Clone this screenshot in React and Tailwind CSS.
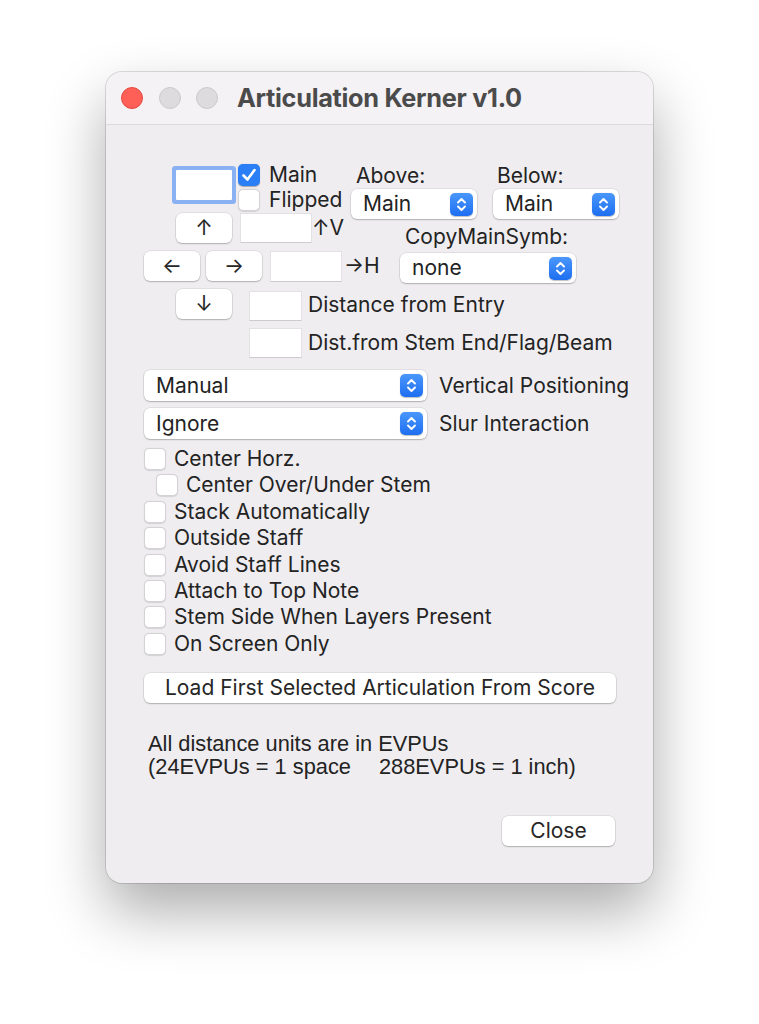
import React from 'react';

const font = { fontFamily: 'Inter, "Noto Sans", sans-serif' };

const Stepper = () => (
  <span className="grid h-[23px] w-[23px] shrink-0 place-items-center rounded-[5px] bg-gradient-to-b from-[#4a97fb] to-[#1d6ef1] shadow-[0_0.5px_1px_rgba(0,0,0,0.25)]">
    <svg width="23" height="23" viewBox="0 0 23 23" fill="none">
      <path d="M8 9.5 11.5 6 15 9.5" stroke="white" strokeWidth="1.9" strokeLinecap="round" strokeLinejoin="round" />
      <path d="M8 13.5 11.5 17 15 13.5" stroke="white" strokeWidth="1.9" strokeLinecap="round" strokeLinejoin="round" />
    </svg>
  </span>
);

const Popup = ({ value, className }) => (
  <div
    className={`flex shrink-0 items-center justify-between rounded-[6px] bg-white pl-[12px] pr-[4px] shadow-[0_0_0_0.5px_rgba(0,0,0,0.12),0_1px_1.5px_rgba(0,0,0,0.22)] ${className}`}
  >
    <span>{value}</span>
    <Stepper />
  </div>
);

const PushButton = ({ children, className }) => (
  <button
    type="button"
    className={`flex shrink-0 items-center justify-center rounded-[6px] bg-white text-[#262626] shadow-[0_0_0_0.5px_rgba(0,0,0,0.12),0_1px_1.5px_rgba(0,0,0,0.22)] ${className}`}
  >
    {children}
  </button>
);

const Field = ({ className }) => (
  <div className={`shrink-0 border border-[#e3e1e4] border-b-[#cdcbce] bg-white ${className}`} />
);

const Check = ({ checked }) =>
  checked ? (
    <span className="grid h-[22px] w-[22px] shrink-0 place-items-center rounded-[5px] bg-[#2a7ef6] shadow-[0_0.5px_1px_rgba(0,0,0,0.3)]">
      <svg width="22" height="22" viewBox="0 0 22 22" fill="none">
        <path d="M5.5 11.5 9.5 15.5 16.5 6" stroke="white" strokeWidth="2.6" strokeLinecap="round" strokeLinejoin="round" />
      </svg>
    </span>
  ) : (
    <span className="h-[22px] w-[22px] shrink-0 rounded-[5px] border border-[#d4d2d5] bg-white shadow-[0_0.5px_1px_rgba(0,0,0,0.12)]" />
  );

const options = [
  ['Center Horz.', false],
  ['Center Over/Under Stem', true],
  ['Stack Automatically', false],
  ['Outside Staff', false],
  ['Avoid Staff Lines', false],
  ['Attach to Top Note', false],
  ['Stem Side When Layers Present', false],
  ['On Screen Only', false]
];

export default function App() {
  return (
    <div className="h-[1024px] w-[759px] bg-white pl-[106px] pt-[72px]" style={font}>
      <div className="flex h-[811px] w-[547px] flex-col overflow-hidden whitespace-nowrap rounded-[16px] bg-[#efedf0] text-[21px] leading-[24px] text-[#232323] shadow-[0_28px_60px_rgba(0,0,0,0.33),0_0_0_1px_rgba(0,0,0,0.13)]">
        {/* title bar */}
        <div className="flex h-[53px] shrink-0 items-center border-b border-[#dcdadd] bg-[#f4f2f5] pl-[15px]">
          <span className="h-[22px] w-[22px] rounded-full border border-[#e2463f] bg-[#fe5f57]" />
          <span className="ml-[16px] h-[22px] w-[22px] rounded-full border border-[#cbc9cc] bg-[#dddbde]" />
          <span className="ml-[15px] h-[22px] w-[22px] rounded-full border border-[#cbc9cc] bg-[#dddbde]" />
          <span className="ml-[19px] text-[25.3px] font-bold tracking-[-0.3px] text-[#4b4b4b]">Articulation Kerner v1.0</span>
        </div>

        {/* body */}
        <div className="flex flex-1 flex-col px-[38px] pt-[39px]">
          <div className="flex">
            {/* left column */}
            <div className="w-[207px] shrink-0">
              <div className="flex h-[47px] items-start">
                <div className="ml-[32px] mt-[6px] h-[30px] w-[56px] shrink-0 rounded-[1px] bg-white shadow-[0_0_0_4px_rgba(120,166,242,0.85)]" />
                <div className="ml-[6px] flex flex-col gap-[3px]">
                  <div className="flex h-[22px] items-center gap-[9px]">
                    <Check checked />
                    <span>Main</span>
                  </div>
                  <div className="flex h-[22px] items-center gap-[9px]">
                    <Check />
                    <span>Flipped</span>
                  </div>
                </div>
              </div>

              <div className="mt-[2px] flex h-[30px] items-center">
                <PushButton className="ml-[32px] h-[30px] w-[56px]">↑</PushButton>
                <Field className="ml-[8px] h-[30px] w-[72px]" />
                <span>↑V</span>
              </div>

              <div className="mt-[8px] flex h-[30px] items-center">
                <PushButton className="h-[30px] w-[56px]">←</PushButton>
                <PushButton className="ml-[6px] h-[30px] w-[56px]">→</PushButton>
                <Field className="ml-[8px] h-[31px] w-[72px]" />
                <span className="ml-[2px]">→H</span>
              </div>

              <div className="mt-[8px] flex h-[32px] items-center">
                <PushButton className="mb-[2px] ml-[32px] h-[30px] w-[56px]">↓</PushButton>
                <Field className="ml-[17px] mt-[2px] h-[30px] w-[53px]" />
                <span className="ml-[6px]">Distance from Entry</span>
              </div>

              <div className="mt-[7px] flex h-[30px] items-center">
                <Field className="ml-[105px] h-[30px] w-[53px]" />
                <span className="ml-[6px]">Dist.from Stem End/Flag/Beam</span>
              </div>
            </div>

            {/* right column */}
            <div className="flex flex-col">
              <div className="flex gap-[16px]">
                <div className="w-[126px]">
                  <div className="pl-[5px]">Above:</div>
                  <Popup value="Main" className="mt-[1px] h-[30px]" />
                </div>
                <div className="w-[126px]">
                  <div className="pl-[4px]">Below:</div>
                  <Popup value="Main" className="mt-[1px] h-[30px]" />
                </div>
              </div>
              <div className="mt-[6px] pl-[54px]">CopyMainSymb:</div>
              <Popup value="none" className="ml-[49px] mt-[4px] h-[30px] w-[176px]" />
            </div>
          </div>

          <div className="mt-[12px] flex items-center">
            <Popup value="Manual" className="h-[31px] w-[283px]" />
            <span className="ml-[12px]">Vertical Positioning</span>
          </div>
          <div className="mt-[7px] flex items-center">
            <Popup value="Ignore" className="h-[31px] w-[283px]" />
            <span className="ml-[12px]">Slur Interaction</span>
          </div>

          <div className="mt-[9px] flex flex-col gap-[4.4px]">
            {options.map(([label, indent]) => (
              <div key={label} className={`flex h-[22px] items-center gap-[8px] ${indent ? 'ml-[12px]' : ''}`}>
                <Check />
                <span>{label}</span>
              </div>
            ))}
          </div>

          <PushButton className="mt-[18px] h-[30px] w-[472px]">Load First Selected Articulation From Score</PushButton>

          <div className="mt-[29px] pl-[4px] text-[21.8px] leading-[23px]" style={{ fontFamily: '"Liberation Sans", Arial, sans-serif' }}>
            <div>All distance units are in EVPUs</div>
            <div className="flex">
              <span>(24EVPUs = 1 space</span>
              <span className="ml-[28px]">288EVPUs = 1 inch)</span>
            </div>
          </div>

          <PushButton className="mt-[38px] h-[30px] w-[113px] self-end">Close</PushButton>
        </div>
      </div>
    </div>
  );
}
